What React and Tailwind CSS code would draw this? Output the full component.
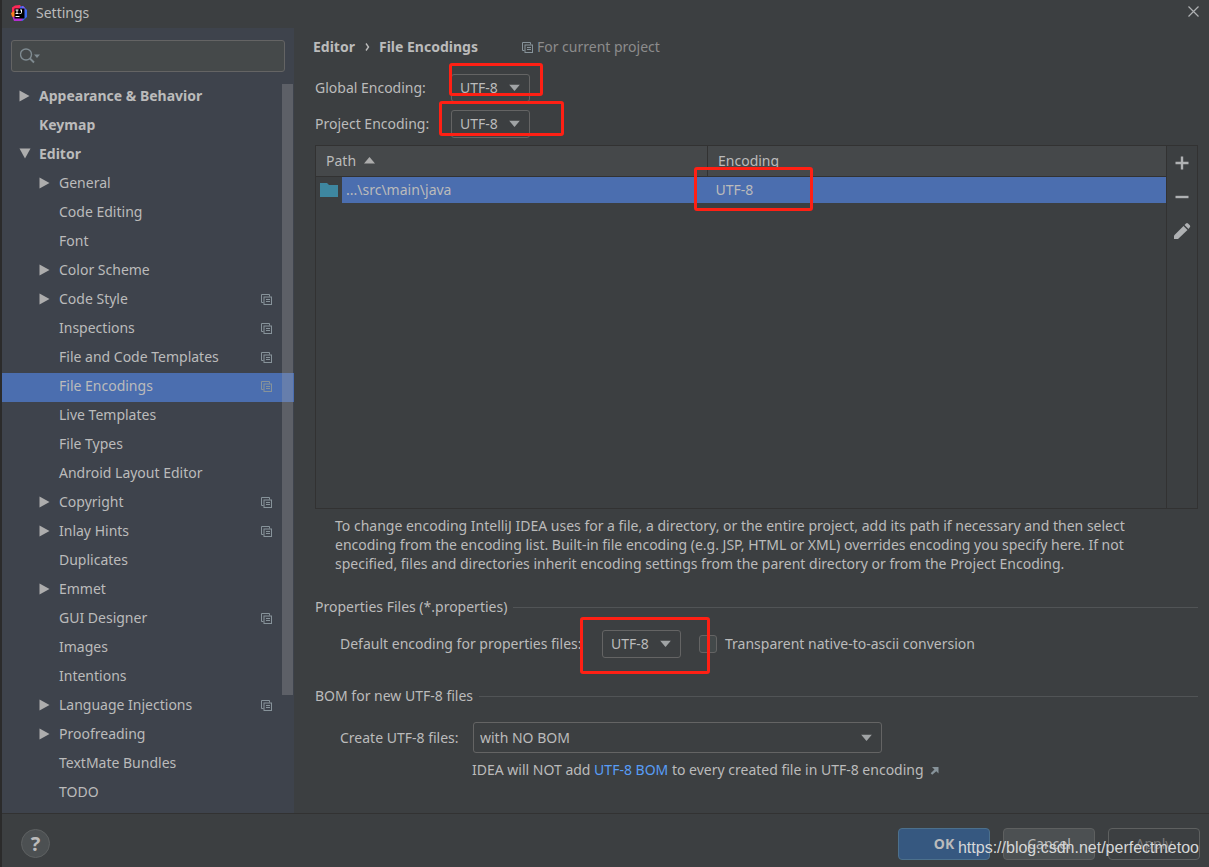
import { useState } from 'react'

const TREE = [
  { label: 'Appearance & Behavior', level: 0, state: 'closed' },
  { label: 'Keymap', level: 0 },
  { label: 'Editor', level: 0, state: 'open' },
  { label: 'General', level: 1, state: 'closed' },
  { label: 'Code Editing', level: 1 },
  { label: 'Font', level: 1 },
  { label: 'Color Scheme', level: 1, state: 'closed' },
  { label: 'Code Style', level: 1, state: 'closed', project: true },
  { label: 'Inspections', level: 1, project: true },
  { label: 'File and Code Templates', level: 1, project: true },
  { label: 'File Encodings', level: 1, project: true },
  { label: 'Live Templates', level: 1 },
  { label: 'File Types', level: 1 },
  { label: 'Android Layout Editor', level: 1 },
  { label: 'Copyright', level: 1, state: 'closed', project: true },
  { label: 'Inlay Hints', level: 1, state: 'closed', project: true },
  { label: 'Duplicates', level: 1 },
  { label: 'Emmet', level: 1, state: 'closed' },
  { label: 'GUI Designer', level: 1, project: true },
  { label: 'Images', level: 1 },
  { label: 'Intentions', level: 1 },
  { label: 'Language Injections', level: 1, state: 'closed', project: true },
  { label: 'Proofreading', level: 1, state: 'closed' },
  { label: 'TextMate Bundles', level: 1 },
  { label: 'TODO', level: 1 },
]

const ENCODINGS = ['UTF-8', 'GBK', 'ISO-8859-1', 'US-ASCII', 'UTF-16']
const BOM_OPTIONS = ['with NO BOM', 'with BOM', 'with BOM under Windows, with no BOM otherwise']

// ─────────────────────────────────────────────────────────
// Icons
// ─────────────────────────────────────────────────────────

function AppLogo() {
  return (
    <svg width="17" height="17" viewBox="0 0 17 17" aria-hidden="true">
      <path d="M1 2.500 4 0.500 9 0l3 4-8 5-3-1.500z" fill="#fe2857" />
      <path d="M0 8l4-2.500V13l-3-1.500z" fill="#fc801d" />
      <path d="M9 1.500 12 1l4 4v7l-4.500 4L7 14z" fill="#3b6af0" />
      <path d="M11 1.200l1-.2 2 2v4l-3-3z" fill="#7a5cf5" />
      <path d="M1.500 12l2.500-.500 8 2-1.500 2.500H3z" fill="#b32fd0" />
      <rect x="3.500" y="3.500" width="10" height="10" fill="#000" />
      <path
        d="M4.500 5h3M6 5v3.500M4.500 8.500h3M9 5h2M10.500 5v2.500q0 1-1 1H8.500"
        stroke="#fff"
        fill="none"
      />
      <path d="M4.500 11.500h4" stroke="#fff" />
    </svg>
  )
}

function ProjectIcon({ className }) {
  return (
    <svg className={className} width="11" height="11" viewBox="0 0 11 11" fill="none" stroke="currentColor" aria-hidden="true">
      <path d="M2.500 8.500h-2v-8h8v2" />
      <rect x="3" y="3" width="7.500" height="7.500" />
      <path d="M5 5.500h4M5 7.500h4" />
    </svg>
  )
}

function Arrow({ state }) {
  return (
    <svg width="12" height="12" viewBox="0 0 12 12" fill="#adadad" aria-hidden="true">
      {state === 'open' ? <path d="M0.500 0.500h11L6 10.500z" /> : <path d="M0.500 0.500v11L10.500 6z" />}
    </svg>
  )
}

// ─────────────────────────────────────────────────────────
// Controls
// ─────────────────────────────────────────────────────────

function Combo({ id, options, wide }) {
  return (
    <div className={wide ? 'relative w-[409px]' : 'relative w-[79px]'}>
      <select
        id={id}
        className={`block w-full appearance-none rounded-[3px] border border-[#646464] bg-transparent text-[#bbbbbb] ${
          wide ? 'h-[31px] px-1.5' : 'h-7 px-2'
        }`}
      >
        {options.map(o => (
          <option key={o}>{o}</option>
        ))}
      </select>
      <svg
        className="pointer-events-none absolute right-2.5 top-1/2 -translate-y-1/2"
        width="11"
        height="7"
        viewBox="0 0 11 7"
        fill="#a0a3a5"
        aria-hidden="true"
      >
        <path d="M0 0h11L5.500 6.500z" />
      </svg>
    </div>
  )
}

function Highlight({ className }) {
  return (
    <span className={`pointer-events-none absolute z-10 rounded-[3px] border-3 border-[#ff2014] ${className}`} />
  )
}

function SectionTitle({ children }) {
  return (
    <div className="flex h-5 items-center gap-1.5">
      <h2>{children}</h2>
      <span className="h-px flex-1 bg-[#515456]" />
    </div>
  )
}

function TreeItem({ item, selected, onSelect }) {
  return (
    <li>
      <button
        type="button"
        onClick={onSelect}
        className={`flex h-[29px] w-full items-center pb-1 pr-[22px] text-left ${
          item.level ? 'pl-[37px]' : 'pl-[17px] font-bold'
        } ${selected ? 'bg-[#4b6eaf]' : ''}`}
      >
        <span className="w-5">{item.state && <Arrow state={item.state} />}</span>
        <span className="flex-1">{item.label}</span>
        {item.project && <ProjectIcon className="mt-0.5 text-[#87939a]" />}
      </button>
    </li>
  )
}

// ─────────────────────────────────────────────────────────
// Panels
// ─────────────────────────────────────────────────────────

function Sidebar() {
  const [active, setActive] = useState('File Encodings')

  return (
    <aside className="flex w-[292px] shrink-0 flex-col bg-[#3e434c]">
      <label className="mx-[9px] mt-3 flex h-8 items-center rounded-[3px] border border-[#646464] bg-[#45494a] px-2">
        <svg width="21" height="16" viewBox="0 0 21 16" fill="none" stroke="#7f8b91" aria-hidden="true">
          <circle cx="6" cy="6.500" r="5.500" strokeWidth="1.400" />
          <path d="M10 10.500l4 4" strokeWidth="1.800" />
          <path d="M14 6.500h6l-3 3.500z" fill="#7f8b91" stroke="none" />
        </svg>
        <input type="text" aria-label="Search settings" className="min-w-0 flex-1 bg-transparent outline-none" />
      </label>
      <nav className="relative mt-[11px] pb-1">
        <ul>
          {TREE.map(item => (
            <TreeItem
              key={item.label}
              item={item}
              selected={item.label === active}
              onSelect={() => setActive(item.label)}
            />
          ))}
        </ul>
        <span className="absolute bottom-[117px] right-px top-px w-[11px] bg-[#a6a6a6]/30" />
      </nav>
    </aside>
  )
}

function EncodingTable() {
  return (
    <div className="flex min-h-[120px] flex-1 border border-[#323232]">
      <div className="flex-1">
        <table className="w-full table-fixed border-collapse text-left">
          <colgroup>
            <col className="w-[26px]" />
            <col className="w-[43%]" />
            <col />
          </colgroup>
          <thead>
            <tr className="h-[30px] border-b border-[#323232] bg-[#45484a]">
              <th colSpan={2} className="pl-2.5 font-normal">
                <span className="flex items-center gap-2">
                  Path
                  <svg width="11" height="7" viewBox="0 0 11 7" fill="#adadad" aria-hidden="true">
                    <path d="M0 6.500h11L5.500 0z" />
                  </svg>
                </span>
              </th>
              <th className="border-l border-[#323232] pl-2.5 font-normal">Encoding</th>
            </tr>
          </thead>
          <tbody>
            <tr className="h-[27px]">
              <td className="pl-1">
                <svg width="18" height="14" viewBox="0 0 18 14" fill="#3e87a0" aria-hidden="true">
                  <path d="M0 0h7l2 2h9v12H0z" />
                </svg>
              </td>
              <td className="bg-[#4b6eaf] pl-1">...\src\main\java</td>
              <td className="relative bg-[#4b6eaf] pl-2">
                UTF-8
                <Highlight className="-left-3.5 -top-2.5 h-11 w-[119px]" />
              </td>
            </tr>
          </tbody>
        </table>
      </div>
      <div className="flex w-[31px] flex-col items-center gap-4 border-l border-[#323232] pt-2 text-[#afb1b3]">
        <button type="button" aria-label="Add">
          <svg width="18" height="18" viewBox="0 0 18 18" stroke="currentColor" strokeWidth="2.400" aria-hidden="true">
            <path d="M2.500 9h13M9 2.500v13" />
          </svg>
        </button>
        <button type="button" aria-label="Remove">
          <svg width="18" height="18" viewBox="0 0 18 18" stroke="currentColor" strokeWidth="2.400" aria-hidden="true">
            <path d="M2.500 9h13" />
          </svg>
        </button>
        <button type="button" aria-label="Edit">
          <svg width="18" height="18" viewBox="0 0 18 18" fill="currentColor" aria-hidden="true">
            <path d="M1 13.500 10.500 4l4 4L5 17H1z" />
            <path d="M11.500 3l1.500-1.500q1-1 2 0l1.800 1.800q1 1 0 2L15.500 7z" />
          </svg>
        </button>
      </div>
    </div>
  )
}

function EncodingsPage() {
  return (
    <main className="flex min-w-0 flex-1 flex-col pb-[33px] pl-[21px] pr-[11px] pt-[9px]">
      <header className="flex h-5 items-center">
        <h1 className="-ml-0.5 flex items-center gap-2 font-bold">
          Editor
          <svg width="8" height="10" viewBox="0 0 8 10" fill="none" stroke="#bbbbbb" strokeWidth="1.400" aria-hidden="true">
            <path d="M3 1.500l2.500 3.500L3 8.500" />
          </svg>
          File Encodings
        </h1>
        <span className="ml-11 flex items-center gap-1 text-[#8c8c8c]">
          <ProjectIcon className="text-[#87939a]" />
          For current project
        </span>
      </header>

      <div className="relative mt-[17px] flex h-7 items-center">
        <label htmlFor="global-encoding" className="w-[136px]">Global Encoding:</label>
        <Combo id="global-encoding" options={ENCODINGS} />
        <Highlight className="-top-[11px] left-[134px] h-[33px] w-[94px]" />
      </div>
      <div className="relative mt-2 flex h-7 items-center">
        <label htmlFor="project-encoding" className="w-[136px]">Project Encoding:</label>
        <Combo id="project-encoding" options={ENCODINGS} />
        <Highlight className="-top-[9px] left-[124px] h-[35px] w-[125px]" />
      </div>

      <div className="mt-[7px] flex flex-1 flex-col">
        <EncodingTable />
      </div>

      <p className="ml-5 mt-[7px] max-w-[830px] leading-[19px]">
        To change encoding IntelliJ IDEA uses for a file, a directory, or the entire project, add its path if
        necessary and then select encoding from the encoding list. Built-in file encoding (e.g. JSP, HTML or XML)
        overrides encoding you specify here. If not specified, files and directories inherit encoding settings from
        the parent directory or from the Project Encoding.
      </p>

      <div className="mt-6">
        <SectionTitle>Properties Files (*.properties)</SectionTitle>
      </div>
      <div className="relative mt-[13px] flex h-7 items-center pl-[25px]">
        <label htmlFor="properties-encoding" className="w-[262px]">
          Default encoding for properties files:
        </label>
        <Combo id="properties-encoding" options={ENCODINGS} />
        <label className="ml-[18px] flex items-center gap-2">
          <input
            type="checkbox"
            className="size-[18px] appearance-none rounded-[3px] border border-[#646464] bg-[#43494a] checked:bg-[#4b6eaf]"
          />
          Transparent native-to-ascii conversion
        </label>
        <Highlight className="-top-[13px] left-[265px] h-[57px] w-[130px]" />
      </div>

      <div className="mt-7">
        <SectionTitle>BOM for new UTF-8 files</SectionTitle>
      </div>
      <div className="mt-4 flex h-[31px] items-center pl-[25px]">
        <label htmlFor="bom" className="w-[133px]">Create UTF-8 files:</label>
        <Combo id="bom" options={BOM_OPTIONS} wide />
      </div>
      <p className="mt-[7px] flex items-center gap-1.5 pl-[157px]">
        <span>
          IDEA will NOT add <a href="#bom" className="text-[#589df6]">UTF-8 BOM</a> to every created file in UTF-8
          encoding
        </span>
        <svg width="9" height="9" viewBox="0 0 9 9" fill="#87939a" aria-hidden="true">
          <path d="M2 1h6.500v6.500L6.300 5.300 2.200 8.800.7 7.300 4.500 3.500z" />
        </svg>
      </p>
    </main>
  )
}

function Footer() {
  return (
    <footer className="relative flex h-[54px] items-center border-t border-[#323232] pl-[19px] pr-[9px] pt-1.5">
      <button
        type="button"
        className="flex size-[29px] items-center justify-center rounded-full border border-[#5e6162] bg-[#4c5052] text-xl font-bold"
        aria-label="Help"
      >
        ?
      </button>
      <div className="ml-auto flex gap-[13px]">
        <button type="button" className="h-8 w-[92px] rounded-[4px] border border-[#4c708c] bg-[#365880] font-bold">
          OK
        </button>
        <button type="button" className="h-8 w-[92px] rounded-[4px] border border-[#5e6060] bg-[#4c5052]">
          Cancel
        </button>
        <button type="button" className="h-8 w-[92px] rounded-[4px] border border-[#5e6060] text-[#777777]" disabled>
          Apply
        </button>
      </div>
      <span className="pointer-events-none absolute bottom-[7px] right-2.5 font-['Liberation_Sans',Arial,sans-serif] text-base text-[#d6d7d8]">
        https://blog.csdn.net/perfectmetoo
      </span>
    </footer>
  )
}

export default function App() {
  return (
    <div className="flex min-h-screen flex-col border-l-2 border-[#2b2b2b] bg-[#3c3f41] font-['Noto_Sans','Open_Sans',sans-serif] text-sm text-[#bbbbbb]">
      <div className="flex h-7 items-center gap-2 pb-0.5 pl-[9px] pr-2.5">
        <AppLogo />
        <span>Settings</span>
        <button type="button" aria-label="Close" className="mb-1 ml-auto">
          <svg width="11" height="11" viewBox="0 0 11 11" stroke="#afb1b3" strokeWidth="1.200" aria-hidden="true">
            <path d="M0.500 0.500l10 10M10.500 0.500l-10 10" />
          </svg>
        </button>
      </div>
      <div className="flex flex-1">
        <Sidebar />
        <EncodingsPage />
      </div>
      <Footer />
    </div>
  )
}
